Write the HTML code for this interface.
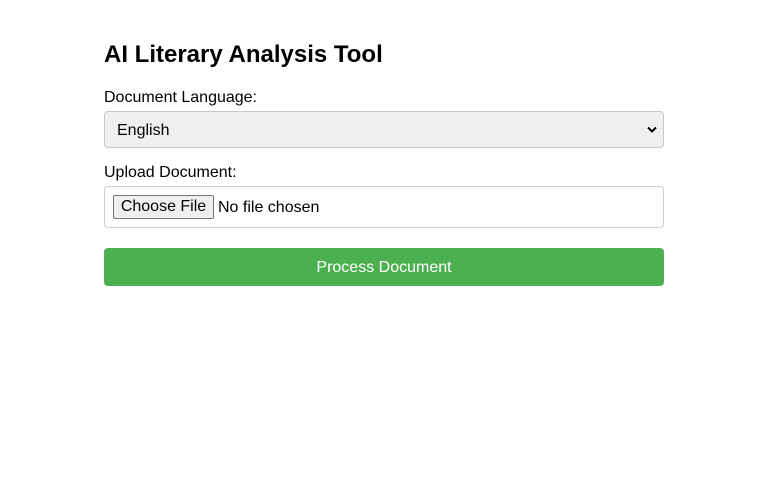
<!DOCTYPE html>
<html><head><style>
body{margin:0;background:#fff;font-family:"Liberation Sans",Arial,sans-serif;color:#000;}
.c{position:absolute;left:104px;width:560px;}
h1{position:absolute;left:104px;top:39px;margin:0;font-size:24px;font-weight:bold;line-height:32px;}
.l{font-size:16px;line-height:18px;}
.sel{top:111px;height:35px;border:1px solid #c8c8c8;border-radius:4px;background:#efefef;box-sizing:content-box;width:558px;}
.sel span{position:absolute;left:12px;top:10px;font-size:16px;}
.sel svg{position:absolute;right:6px;top:14px;}
.file{top:186px;height:40px;border:1px solid #ccc;border-radius:4px;width:558px;}
.btnf{position:absolute;left:8px;top:8px;height:24px;width:101px;border:1px solid #767676;border-radius:2px;background:#efefef;font-size:16px;line-height:22px;text-align:center;box-sizing:border-box;}
.nf{position:absolute;left:113px;top:12px;font-size:16px;line-height:18px;}
.go{top:248px;height:38px;background:#4caf50;border-radius:4px;color:#fff;font-size:16px;line-height:40px;text-align:center;}
</style></head><body>
<h1>AI Literary Analysis Tool</h1>
<div class="c l" style="top:89px">Document Language:</div>
<div class="c sel"><span>English</span><svg width="10" height="8" viewBox="0 0 10 8"><path d="M1 1.5 L5 5.5 L9 1.5" fill="none" stroke="#000" stroke-width="2"/></svg></div>
<div class="c l" style="top:164px">Upload Document:</div>
<div class="c file"><div class="btnf">Choose File</div><div class="nf">No file chosen</div></div>
<div class="c go">Process Document</div>
</body></html>
